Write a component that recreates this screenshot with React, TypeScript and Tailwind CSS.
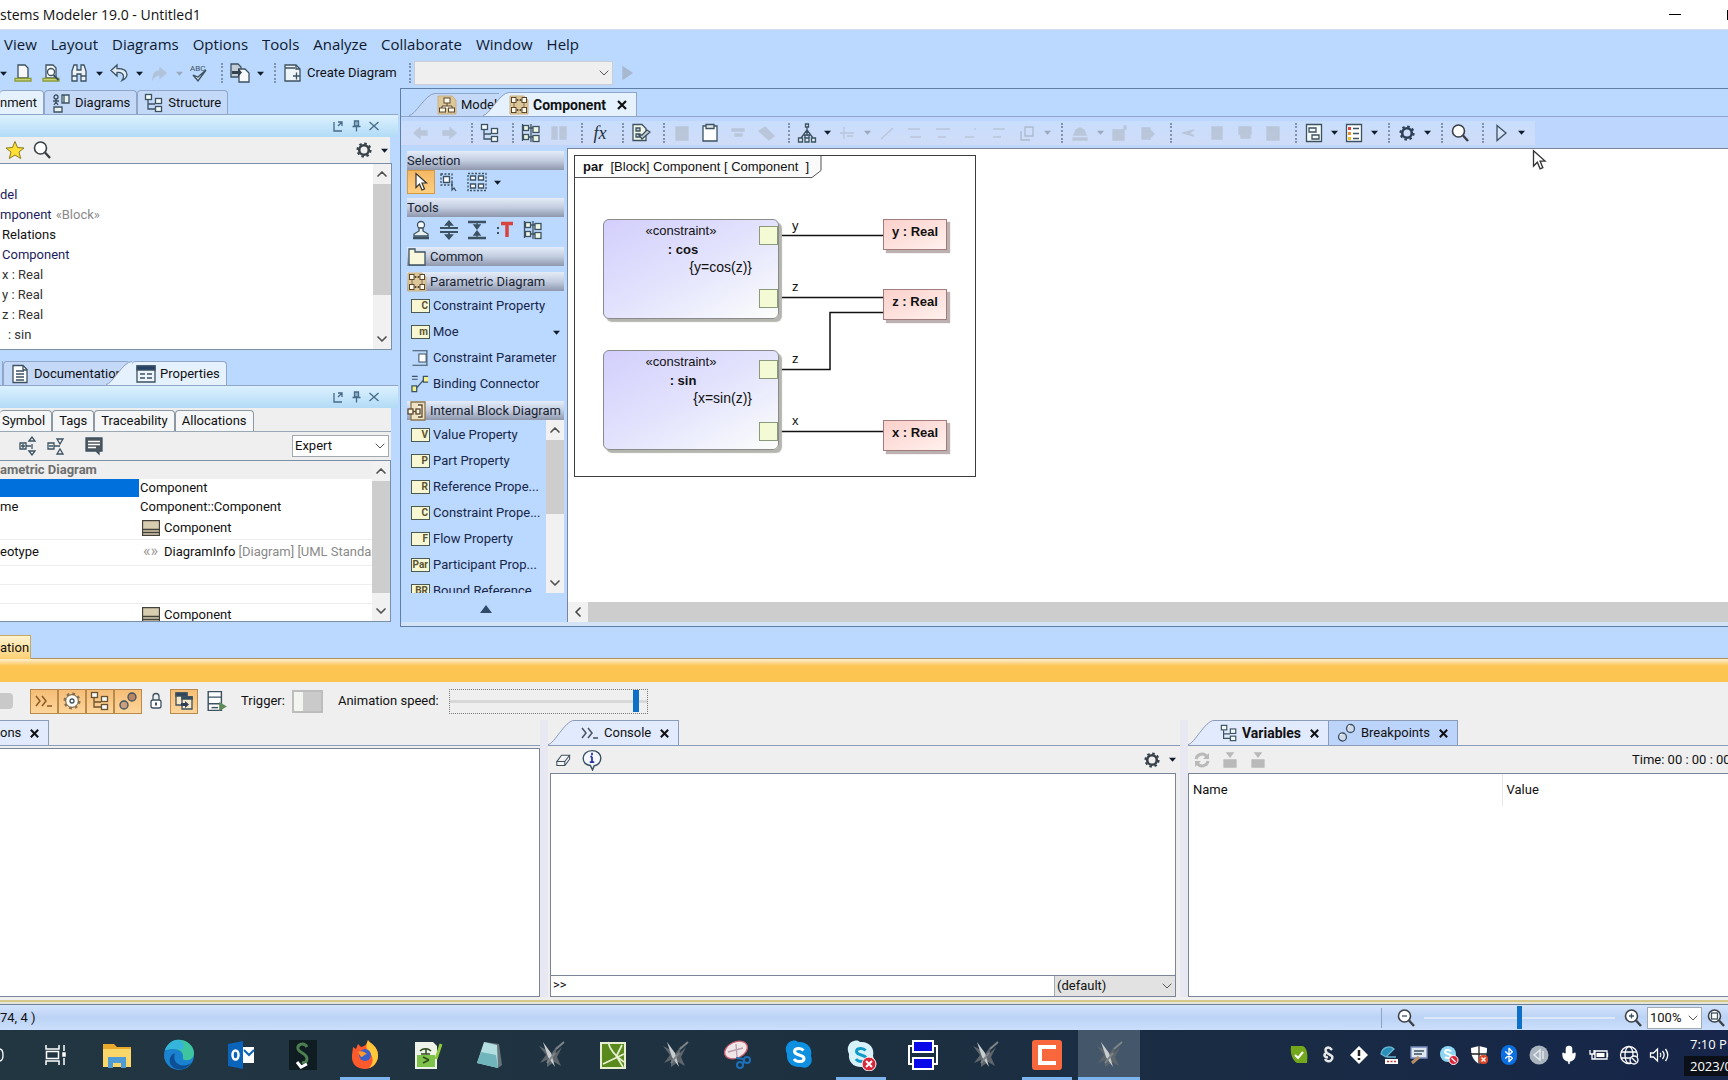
import type { ReactNode } from "react";
import { ChevronDown, ChevronUp, ChevronLeft, Mic, Bluetooth } from "lucide-react";

/* ---------- small drawing helpers ---------- */

function Icon({ children, className = "size-5", box = "0 0 20 20" }: { children: ReactNode; className?: string; box?: string }) {
  return (
    <svg viewBox={box} className={`shrink-0 ${className}`} fill="none" stroke="#3c5261" strokeWidth="1.3" aria-hidden="true">
      {children}
    </svg>
  );
}

const TreeIcon = ({ color = "#3c5261", className = "size-5" }: { color?: string; className?: string }) => (
  <Icon className={className}>
    <g stroke={color} fill="#f4fbf8">
      <path d="M4 7v9h8M4 11h7" fill="none" />
      <rect x="1.5" y="1.5" width="6" height="5" />
      <rect x="11.5" y="5.5" width="6" height="5" />
      <rect x="11.5" y="13.5" width="6" height="5" />
    </g>
  </Icon>
);

const BlocksIcon = () => (
  <Icon>
    <g fill="#eef7e6">
      <path d="M1.5 1v17M10 1v18" />
      <rect x="2.5" y="2.5" width="5" height="5" />
      <rect x="2.5" y="11.5" width="5" height="5" />
      <path d="M7.500 5H12M7.500 14H12" />
      <rect x="12" y="3.5" width="6" height="6" />
      <rect x="12" y="12.5" width="6" height="6" />
    </g>
  </Icon>
);

const ParIcon = () => (
  <Icon>
    <path d="M1 1h14l4 4v14H1z" fill="#dcc798" stroke="#c8b084" strokeWidth="1" />
    <g stroke="#5b4630" strokeWidth="1" fill="#fffaea">
      <path d="M7 5h6M5 7v6M15 7v6M7 15h6" strokeWidth="0.7" />
      <path d="M8.500 4v2M11.500 4v2M8.500 14v2M11.500 14v2" />
      <rect x="2.5" y="2.5" width="4.500" height="5" />
      <rect x="13" y="2.5" width="4.500" height="5" />
      <rect x="2.5" y="12.500" width="4.500" height="5" />
      <rect x="13" y="12.500" width="4.500" height="5" />
    </g>
  </Icon>
);

const ModelIcon = () => (
  <Icon>
    <path d="M1 1h14l4 4v14H1z" fill="#dcc798" stroke="#c8b084" strokeWidth="1" />
    <g stroke="#5b4630" strokeWidth="1" fill="#fffaea">
      <path d="M10 8v3M5 13v-2h10v2" />
      <rect x="7" y="3" width="6" height="5" />
      <rect x="2.5" y="13" width="6" height="4" />
      <rect x="11.5" y="13" width="6" height="4" />
    </g>
  </Icon>
);

const IbdIcon = () => (
  <Icon>
    <path d="M4 1h14v18H4z" fill="#efe2c2" stroke="#8a7550" />
    <g stroke="#5b4630" fill="#fdf6df">
      <path d="M11 4h4v12h-4" />
      <rect x="1" y="8" width="5" height="5" />
      <rect x="9" y="8" width="4" height="5" />
      <path d="M6 10.5h3" />
    </g>
  </Icon>
);

const Magnifier = ({ sign = "" }: { sign?: string }) => (
  <Icon>
    <circle cx="8.5" cy="8" r="6" fill="#fff" strokeWidth="1.6" stroke="#3b4046" />
    <path d="M13 12.5l5 5.5" strokeWidth="2.4" stroke="#3b4046" />
    {sign === "-" && <path d="M6 8h5" />}
    {sign === "+" && <path d="M6 8h5M8.500 5.500v5" />}
    {sign === "fit" && <rect x="5.5" y="5" width="6" height="6" />}
  </Icon>
);

const Gear = ({ color = "#38424a" }: { color?: string }) => (
  <Icon>
    <circle cx="10" cy="10" r="4.8" stroke={color} strokeWidth="2.600" />
    <circle cx="10" cy="10" r="6.6" stroke={color} strokeWidth="2" strokeDasharray="2.6 2.580" />
  </Icon>
);

const Balls = () => (
  <Icon>
    <circle cx="13.5" cy="5.5" r="4" fill="#cfd9ea" />
    <circle cx="5.5" cy="14" r="4" fill="#cfd9ea" />
    <path d="M11 3.5l2-1M3 12l2-1" stroke="#fff" />
  </Icon>
);

const ConsoleIcon = ({ color = "#475260" }: { color?: string }) => (
  <Icon>
    <path d="M2 5l4 5-4 5M8 5l4 5-4 5M13 15h5" stroke={color} strokeWidth="1.5" />
  </Icon>
);

const Undo = () => (
  <Icon>
    <path d="M8 2L2 7.500 8 13v-3.500c4-.5 6.500 1 6.500 4 0 1.500-.5 2.500-1.500 4 3-1.500 5-3.500 5-6C18 7.500 14 5.500 8 5.500z" fill="#e2ecf7" />
  </Icon>
);

// greyed out toolbar command
const Ghost = ({ d = "M4 4h12v13H4z" }: { d?: string }) => (
  <Icon>
    <path d={d} fill="#a9b0ba" stroke="#a9b0ba" opacity="0.5" />
  </Icon>
);

const Pointer = ({ className = "size-5" }: { className?: string }) => (
  <Icon className={className}>
    <path d="M5 1.5v14l3.500-3.500 2.500 6 2.500-1-2.500-6h4.500z" fill="#fff" stroke="#333" strokeWidth="1.2" />
  </Icon>
);

/* ---------- toolbar pieces ---------- */

function Tool({ label, children }: { label: string; children: ReactNode }) {
  return (
    <button aria-label={label} className="flex h-6 w-7 shrink-0 items-center justify-center">
      {children}
    </button>
  );
}

const Caret = ({ faint = false }: { faint?: boolean }) => (
  <span className="flex w-3 shrink-0 justify-center">
    <Icon className="size-[7px]" box="0 0 8 8">
      <path d="M0 2h8L4 6.500z" fill={faint ? "#9aa9bd" : "#101c2c"} stroke="none" />
    </Icon>
  </span>
);

const Grip = () => (
  <span className="flex w-[13px] shrink-0 justify-end pr-[3px]">
    <span className="h-5 border-l-2 border-dotted border-[#7f93ae]" />
  </span>
);

const Slant = ({ fill }: { fill: string }) => (
  <svg viewBox="0 0 26 25" className="h-full w-[26px] shrink-0" preserveAspectRatio="none" fill="none" aria-hidden="true">
    <path d="M0 25C6 25 17 0 26 0.500V25z" fill={fill} />
    <path d="M0 24.5C6 24.500 17 0.500 26 0.500" stroke="#8a9cb8" />
  </svg>
);

const Close = ({ className = "size-3" }: { className?: string }) => (
  <Icon className={className} box="0 0 12 12">
    <path d="M2 2l8 8M10 2l-8 8" stroke="#111" strokeWidth="2.2" />
  </Icon>
);

function DockHeader() {
  return (
    <div className="flex h-[22px] shrink-0 items-center justify-end gap-1.5 bg-linear-to-b from-[#dcf1ff] to-[#b2dbf6] pr-[18px]">
      <button aria-label="Float">
        <Icon className="size-3" box="0 0 12 12">
          <path d="M2 2v9h8M6 2h4v4M10 2L6 6" stroke="#456a88" />
        </Icon>
      </button>
      <button aria-label="Pin">
        <Icon className="size-3" box="0 0 12 12">
          <path d="M4.500 1h4v5h-4zM2.500 6.500h8M6.500 6.500v5" stroke="#456a88" fill="#8fb0c8" />
        </Icon>
      </button>
      <button aria-label="Close">
        <Icon className="size-3" box="0 0 12 12">
          <path d="M1.500 2l9 8M10.500 2l-9 8" stroke="#456a88" />
        </Icon>
      </button>
    </div>
  );
}

function ScrollBar({ thumb }: { thumb: string }) {
  return (
    <div className="flex w-[18px] shrink-0 flex-col items-center bg-[#f1f1f1] text-[#505050]">
      <span className="flex h-5 items-center"><ChevronUp className="size-4" strokeWidth={2.5} /></span>
      <span className={`w-full bg-[#cdcdcd] ${thumb}`} />
      <span className="mt-auto flex h-5 items-center"><ChevronDown className="size-4" strokeWidth={2.5} /></span>
    </div>
  );
}

function Drop({ label, value, className }: { label: string; value: string; className: string }) {
  return (
    <span className={`relative flex items-center border border-[#a3a9b1] ${className}`}>
      <select aria-label={label} className="h-full w-full appearance-none bg-transparent pl-0.5 outline-none">
        <option>{value}</option>
      </select>
      <ChevronDown className="pointer-events-none absolute right-0 size-4 text-[#555]" strokeWidth={1.5} />
    </span>
  );
}

/* ---------- top of the window ---------- */

function TopBars() {
  const menus = ["View", "Layout", "Diagrams", "Options", "Tools", "Analyze", "Collaborate", "Window", "Help"];
  return (
    <header className="shrink-0">
      <div className="flex h-[29px] items-center bg-white [font-family:'Open_Sans',sans-serif] text-sm">
        <span>stems Modeler 19.0 - Untitled1</span>
        <button aria-label="Minimize" className="mr-[46px] ml-auto h-px w-3 bg-black" />
        <button aria-label="Maximize" className="h-2.5 w-px bg-black" />
      </div>
      <nav className="flex h-[29px] items-center gap-3.5 border-t border-[#d5dcf0] pl-1 [font-family:'Open_Sans',sans-serif] text-[15px] font-medium text-[#0d1a30]">
        {menus.map((m) => (
          <button key={m}>{m}</button>
        ))}
      </nav>
      <div className="flex h-[30px] items-center text-[13px]">
        <span className="flex w-[9px] justify-end"><Caret /></span>
        <Tool label="New">
          <Icon>
            <path d="M5 2h7l3 3v10H5z" fill="#f6f8fa" />
            <path d="M2 15.5h16V18H2z" fill="#dbe48c" stroke="#8c9c34" />
          </Icon>
        </Tool>
        <Tool label="Print preview">
          <Icon>
            <path d="M5 2h7l3 3v10H5z" fill="#f6f8fa" />
            <path d="M2 15.5h16V18H2z" fill="#dbe48c" stroke="#8c9c34" />
            <circle cx="10" cy="9" r="3.5" fill="#fff" />
            <path d="M12.5 12l5 5" strokeWidth="2" />
          </Icon>
        </Tool>
        <Tool label="Find">
          <Icon>
            <path d="M3 8l2-6h3v5h4V2h3l2 6v10h-5v-7H8v7H3z" fill="#eef3f8" />
            <path d="M3 13h5M12 13h5" />
          </Icon>
        </Tool>
        <Caret />
        <Tool label="Undo"><Undo /></Tool>
        <Caret />
        <Tool label="Redo"><Ghost d="M4 16c0-6 2-8 7-8V5l6 5-6 5v-3c-4 0-5 1-7 4z" /></Tool>
        <Caret faint />
        <Tool label="Spelling">
          <Icon>
            <text x="1" y="8" fontSize="8" fill="#3c5261" stroke="none" className="[font-family:Roboto,sans-serif]">ABC</text>
            <path d="M4 12l5 6 8-11-8 7z" fill="#cdd7e4" />
          </Icon>
        </Tool>
        <Grip />
        <Tool label="Export">
          <Icon>
            <path d="M1 1h7l3 3v10H1z" fill="#c3ced8" />
            <path d="M9 6h6l4 4v9H9z" fill="#f6f8fa" />
            <path d="M2 8h6v-3l4 4.500L8 14v-3H2z" fill="#33424f" stroke="none" />
          </Icon>
        </Tool>
        <Caret />
        <Grip />
        <button className="flex items-center pl-1">
          <Icon>
            <path d="M2 2h11l4 4v12H2z" fill="#eef4f8" />
            <path d="M2 5h10M13 2v4h4M10 13h7M13.500 9.500v7" />
          </Icon>
          <span className="pr-1 pl-1">Create Diagram</span>
        </button>
        <Grip />
        <Drop label="Perspective" value="" className="h-6 w-[199px] border-[#c9ced6] bg-[#efefef]" />
        <Tool label="Run">
          <Icon>
            <path d="M6 4l9 6-9 6z" fill="#a7b8cf" stroke="#a7b8cf" />
          </Icon>
        </Tool>
      </div>
    </header>
  );
}

/* ---------- left docks ---------- */

function DockTab({ icon, children, className = "" }: { icon?: ReactNode; children: ReactNode; className?: string }) {
  return (
    <button className={`flex h-6 shrink-0 items-center gap-1 rounded-t-sm border border-b-0 border-[#8fa6c8] px-1.5 ${className}`}>
      {icon}
      {children}
    </button>
  );
}

const treeItems = [
  { text: "del", pad: "pl-0", color: "text-[#1c1c5c]" },
  { text: "mponent", tag: "«Block»", pad: "pl-0", color: "text-[#1c1c5c]" },
  { text: "Relations", pad: "pl-0.5", color: "text-[#111]" },
  { text: "Component", pad: "pl-0.5", color: "text-[#1c1c5c]" },
  { text: "x : Real", pad: "pl-0.5", color: "text-[#333]" },
  { text: "y : Real", pad: "pl-0.5", color: "text-[#333]" },
  { text: "z : Real", pad: "pl-0.5", color: "text-[#333]" },
  { text: ": sin", pad: "pl-2", color: "text-[#333]" },
];

const ClassIcon = () => (
  <Icon className="h-4 w-[18px]" box="0 0 18 16">
    <path d="M.5.5h17v15H.5z" fill="#d9cdb0" stroke="#44403a" />
    <path d="M1 9.5h16M1 12.5h16" stroke="#44403a" />
  </Icon>
);

function LeftDocks() {
  return (
    <aside className="flex w-[398px] shrink-0 flex-col pt-0.5 pb-[5px]">
      <section className="flex min-h-0 flex-1 flex-col">
        <div className="flex border-b border-[#8fa6c8]">
          <DockTab className="border-l-0 bg-[#e6f1fe] pl-0">nment</DockTab>
          <DockTab
            className="bg-[#c4d9f8]"
            icon={
              <Icon>
                <circle cx="5" cy="4" r="2" />
                <path d="M5 6v5M2 8h6M5 9l-2 3M5 9l2 3M11 2h7v8h-7zM13 2v8M3 14h8v5H3z" fill="#e8f2f0" />
              </Icon>
            }
          >
            Diagrams
          </DockTab>
          <DockTab className="bg-[#c4d9f8]" icon={<TreeIcon />}>Structure</DockTab>
        </div>
        <DockHeader />
        <div className="mr-2 flex h-[26px] shrink-0 items-center bg-[#efefef]">
          <button aria-label="Favorites">
            <Icon className="mx-[5px] size-5">
              <path d="M10 1.5l2.500 6 6.500.5-5 4 1.700 6.500L10 15l-5.700 3.500L6 12 1 8l6.500-.5z" fill="#ffe033" stroke="#8a7a20" strokeWidth="1" />
            </Icon>
          </button>
          <button aria-label="Search" className="pl-0.5"><Magnifier /></button>
          <span className="ml-auto" />
          <Tool label="Options"><Gear /></Tool>
          <Caret />
        </div>
        <div className="mr-1.5 flex min-h-0 flex-1 border border-l-0 border-[#7b8fa8] bg-white">
          <ul className="flex-1 pt-[21px]">
            {treeItems.map((t) => (
              <li key={t.text} className={`h-5 leading-5 ${t.pad} ${t.color}`}>
                {t.text}
                {t.tag && <span className="pl-1 text-[#8a8a8a]">{t.tag}</span>}
              </li>
            ))}
          </ul>
          <ScrollBar thumb="h-[111px]" />
        </div>
      </section>

      <section className="mt-[11px] flex h-[261px] shrink-0 flex-col">
        <div className="flex border-b border-[#8fa6c8]">
          <span className="w-[3px] border-r border-[#8fa6c8]" />
          <DockTab
            className="w-[127px] border-r-0 bg-[#c4d9f8]"
            icon={
              <Icon>
                <path d="M3 1.5h10l4 4v13H3z" fill="#fff" />
                <path d="M6 7h8M6 10h8M6 13h8M6 16h8M13 2v4h4" />
              </Icon>
            }
          >
            Documentation
          </DockTab>
          <div className="-ml-6 flex h-6">
            <Slant fill="#e6f1fe" />
            <DockTab
              className="border-l-0 bg-[#e6f1fe] pl-1"
              icon={
                <Icon>
                  <path d="M1 2h18v16H1z" fill="#eef4fb" />
                  <path d="M1 2h18v4H1z" fill="#22406a" />
                  <path d="M4 10h5M11 10h5M4 14h5M11 14h5" />
                </Icon>
              }
            >
              Properties
            </DockTab>
          </div>
        </div>
        <DockHeader />
        <div className="mr-[7px] flex h-6 shrink-0 border-b border-[#9aa7b5] bg-[#efefef] pt-0.5">
          {["Symbol", "Tags", "Traceability", "Allocations"].map((t) => (
            <button key={t} className="rounded-t-sm border border-b-0 border-[#8e98a3] bg-[#f5f6f7] px-1.5 first:border-l-0 first:pl-0.5">
              {t}
            </button>
          ))}
        </div>
        <div className="mr-[7px] flex h-7 shrink-0 items-center bg-[#efefef] pl-3.5">
          <Tool label="Expand">
            <Icon>
              <path d="M2 7h6v6H2zM3 10h4M5 8v4M8 10h5M14 8v5" />
              <path d="M11 5l3-4 3 4zM11 15l3 4 3-4z" />
            </Icon>
          </Tool>
          <Tool label="Collapse">
            <Icon>
              <path d="M2 7h6v6H2zM3 10h4M8 10h6" />
              <path d="M11 3l3 5 3-5zM11 18l3-5 3 5z" />
            </Icon>
          </Tool>
          <span className="w-2.5" />
          <Tool label="Description">
            <Icon>
              <path d="M2 2h16v13h-3v3l-3-3H2z" fill="#4e565e" />
              <path d="M4 5.5h12M4 8.500h12M4 11.500h8" stroke="#fff" />
            </Icon>
          </Tool>
          <Drop label="Mode" value="Expert" className="mr-0.5 ml-auto h-[22px] w-[97px] bg-white" />
        </div>
        <div className="mr-[7px] flex min-h-0 flex-1 overflow-hidden border border-l-0 border-[#7b8fa8] bg-white">
          <div className="h-full min-w-0 flex-1 overflow-hidden">
            <table className="w-full table-fixed">
              <colgroup>
                <col className="w-[139px]" />
                <col />
              </colgroup>
              <tbody>
                <tr className="h-[18px] bg-[#efefef] text-left text-[#6e6e6e]">
                  <th colSpan={2} className="font-bold">ametric Diagram</th>
                </tr>
                <tr className="h-[18px]"><td className="bg-[#0070dc]" /><td className="pl-px">Component</td></tr>
                <tr className="h-5"><td>me</td><td className="pl-px">Component::Component</td></tr>
                <tr className="h-[22px] border-b border-[#eee]">
                  <td />
                  <td><span className="flex items-center gap-1 pl-[3px]"><ClassIcon />Component</span></td>
                </tr>
                <tr className="h-[26px] border-b border-[#eee]">
                  <td>eotype</td>
                  <td className="overflow-hidden pl-1 whitespace-nowrap">
                    <span className="pr-1.5 text-base leading-4 text-[#999]">«»</span>
                    <span>DiagramInfo</span> <span className="text-[#8a8a8a]">[Diagram] [UML Standard]</span>
                  </td>
                </tr>
                <tr className="h-[19px] border-b border-[#eee]"><td /><td /></tr>
                <tr className="h-[19px] border-b border-[#eee]"><td /><td /></tr>
                <tr className="h-6">
                  <td />
                  <td><span className="flex items-center gap-1 pl-[3px]"><ClassIcon />Component</span></td>
                </tr>
              </tbody>
            </table>
          </div>
          <ScrollBar thumb="h-[112px]" />
        </div>
      </section>
    </aside>
  );
}

/* ---------- palette ---------- */

function PaletteHead({ icon, children }: { icon?: ReactNode; children: ReactNode }) {
  return (
    <h3 className="flex h-[19px] shrink-0 items-center gap-[3px] bg-linear-to-b from-[#e4ecf8] via-[#c3cde0] to-[#8e97ac] whitespace-nowrap text-[#1b2433]">
      {icon}
      {children}
    </h3>
  );
}

const Letter = ({ children }: { children: string }) => (
  <span className="flex h-[14px] w-[19px] shrink-0 items-center justify-end border border-[#4c5a52] bg-[#f7f7d4] pr-px text-[10px] leading-none font-bold text-[#5c5330]">
    {children}
  </span>
);

function PaletteItem({ icon, children }: { icon: ReactNode; children: ReactNode }) {
  return (
    <button className="flex h-[26px] w-full shrink-0 items-center gap-[3px] pl-1 text-left whitespace-nowrap text-[#17274a]">
      {icon}
      {children}
    </button>
  );
}

const properties = [
  ["V", "Value Property"],
  ["P", "Part Property"],
  ["R", "Reference Prope..."],
  ["C", "Constraint Prope..."],
  ["F", "Flow Property"],
  ["Par", "Participant Prop..."],
  ["BR", "Bound Reference"],
];

function Palette() {
  return (
    <div className="flex w-[157px] shrink-0 flex-col pt-[3px]">
      <PaletteHead>Selection</PaletteHead>
      <div className="flex h-7 items-start">
        <button aria-label="Select" className="flex h-6 w-7 items-center justify-center border border-[#d99a3c] bg-linear-to-b from-[#f3b765] to-[#ffcf80]">
          <Pointer />
        </button>
        <Tool label="Select area">
          <Icon>
            <path d="M2 2h11v11H2z" strokeDasharray="2 1.5" />
            <path d="M4.500 4.500h6v6h-6z" fill="#fff" />
            <path d="M13 10v8l2-2 2 3" />
          </Icon>
        </Tool>
        <Tool label="Select all">
          <Icon>
            <path d="M1 1.5h18v17H1z" strokeDasharray="2 1.5" />
            <path d="M3.500 4h5v4h-5zM11.500 4h5v4h-5zM3.500 12h5v4h-5zM11.500 12h5v4h-5z" fill="#fff" />
          </Icon>
        </Tool>
        <span className="flex h-6 items-center"><Caret /></span>
      </div>
      <PaletteHead>Tools</PaletteHead>
      <div className="flex h-[30px] items-center pb-1">
        <Tool label="Stamp">
          <Icon>
            <circle cx="10" cy="5" r="3.5" fill="#fff" />
            <path d="M8 8v3l-5 3v2h14v-2l-5-3V8z" fill="#e8f0f0" />
            <path d="M2 18h16" strokeWidth="2.5" />
          </Icon>
        </Tool>
        <Tool label="Spread">
          <Icon>
            <path d="M1 8h18M1 12h18M10 3v4M10 13v3" strokeWidth="1.8" />
            <path d="M6.500 5L10 1l3.500 4zM6.500 15l3.500 4 3.500-4z" fill="#3c5261" />
          </Icon>
        </Tool>
        <Tool label="Compress">
          <Icon>
            <path d="M1 2h18M1 18h18" strokeWidth="2.5" />
            <path d="M10 3v4M10 13v4" />
            <path d="M7 5h6l-3 4zM7 15h6l-3-4z" fill="#3c5261" />
          </Icon>
        </Tool>
        <Tool label="Text">
          <Icon>
            <path d="M6 3.500h12M12 4v13" stroke="#d8433f" strokeWidth="3.5" />
            <path d="M3 7v2M3 12v2" strokeWidth="2" />
          </Icon>
        </Tool>
        <Tool label="Blocks"><BlocksIcon /></Tool>
      </div>
      <PaletteHead
        icon={
          <Icon>
            <path d="M2 5V2h6v3h10v13H2z" fill="#f9f8dc" />
          </Icon>
        }
      >
        Common
      </PaletteHead>
      <div className="h-1.5 shrink-0" />
      <PaletteHead icon={<ParIcon />}>Parametric Diagram</PaletteHead>
      <div className="h-0.5 shrink-0" />
      <PaletteItem icon={<Letter>C</Letter>}>Constraint Property</PaletteItem>
      <PaletteItem icon={<Letter>m</Letter>}>
        Moe
        <span className="mr-0.5 ml-auto"><Caret /></span>
      </PaletteItem>
      <PaletteItem
        icon={
          <Icon className="h-4 w-[19px]">
            <path d="M0 1h19M0 19h19M18 1v18" />
            <path d="M8 5h9v10H8z" fill="#fff" />
          </Icon>
        }
      >
        Constraint Parameter
      </PaletteItem>
      <PaletteItem
        icon={
          <Icon className="h-5 w-[19px]">
            <path d="M1 2h6M1 5h6M6 14L13 6" />
            <path d="M1 12h5v6H1zM18 2h-5v6h5" fill="#f3f08c" />
          </Icon>
        }
      >
        Binding Connector
      </PaletteItem>
      <div className="h-1 shrink-0" />
      <PaletteHead icon={<IbdIcon />}>Internal Block Diagram</PaletteHead>
      <div className="flex h-[173px] shrink-0 overflow-hidden">
        <div className="min-w-0 flex-1 pt-0.5">
          {properties.map(([k, name]) => (
            <PaletteItem key={name} icon={<Letter>{k}</Letter>}>{name}</PaletteItem>
          ))}
        </div>
        <ScrollBar thumb="h-[74px]" />
      </div>
      <button aria-label="Collapse palette" className="mt-2.5 flex justify-center">
        <Icon className="h-3 w-4" box="0 0 16 12">
          <path d="M2 10h12L8 2z" fill="#2f4a66" stroke="none" />
        </Icon>
      </button>
    </div>
  );
}

/* ---------- diagram ---------- */

function Constraint({ name, rule, className, ports }: { name: string; rule: string; className: string; ports: string[] }) {
  return (
    <div className={`absolute left-[28px] h-[100px] w-[176px] rounded-md border border-[#8b8b8b] bg-linear-to-br from-[#d3cffc] via-[#e3e3fd] to-[#fcfefb] pt-px text-center leading-[19px] shadow-[3px_3px_1px_#b5b5b0] ${className}`}>
      <p className="pr-5">«constraint»</p>
      <p className="pr-4 font-bold">: {name}</p>
      <p className="pr-[26px] text-right text-sm leading-[17px]">{rule}</p>
      {ports.map((p) => (
        <span key={p} className={`absolute right-0 size-[19px] border border-[#8b9a7c] bg-[#f4fbd4] ${p}`} />
      ))}
    </div>
  );
}

const Value = ({ children, className }: { children: string; className: string }) => (
  <div className={`absolute left-[308px] h-[31px] w-16 border border-[#a07d7d] bg-linear-to-br from-[#fbd0cb] to-[#fff1ee] text-center leading-6 font-bold shadow-[3px_3px_1px_#bdb0b0] ${className}`}>
    {children}
  </div>
);

function Diagram() {
  return (
    <div className="flex min-w-0 flex-1 flex-col border-t border-l border-[#7b8598] bg-white">
      <div className="relative flex-1 pt-1.5 pl-1.5 [font-family:'Liberation_Sans',sans-serif] text-[13px] text-[#111]">
        <div className="relative h-[322px] w-[402px] border border-[#3d3d3d]">
          <svg className="absolute top-0 left-0 h-full w-full" fill="none" stroke="#111" strokeWidth="1.5" aria-hidden="true">
            <path d="M0 21.5h237l9-7V0" fill="#fafafa" stroke="#555" strokeWidth="1" />
            <path d="M204 79.5h104M204 141.5h104M204 213.5h51V156.500h53M204 275.5h104" />
          </svg>
          <p className="relative pl-2 leading-[22px] whitespace-pre">
            <b>par</b>{"  [Block] Component [ Component  ]"}
          </p>
          <Constraint name="cos" rule="{y=cos(z)}" className="top-[63px]" ports={["top-[6px]", "top-[69px]"]} />
          <Constraint name="sin" rule="{x=sin(z)}" className="top-[194px]" ports={["top-[9px]", "top-[71px]"]} />
          <Value className="top-[63px]">y : Real</Value>
          <Value className="top-[133px]">z : Real</Value>
          <Value className="top-[264px]">x : Real</Value>
          <span className="absolute top-[61px] left-[217px]">y</span>
          <span className="absolute top-[122px] left-[217px]">z</span>
          <span className="absolute top-[194px] left-[217px]">z</span>
          <span className="absolute top-[256px] left-[217px]">x</span>
        </div>
        <Pointer className="absolute top-0 right-[178px] size-[22px]" />
      </div>
      <div className="flex h-5 shrink-0 items-center bg-[#f1f1f1]">
        <ChevronLeft className="mx-0.5 size-4 text-[#444]" strokeWidth={2.5} />
        <span className="h-full flex-1 bg-[#cdcdcd]" />
      </div>
    </div>
  );
}

function Editor() {
  return (
    <main className="ml-0.5 flex min-w-0 flex-1 flex-col border-t border-b border-l border-[#5f7fa6]">
      <div className="flex h-7 shrink-0 items-end border-b border-[#8fa6c8]">
        <div className="ml-2 flex h-[23px]">
          <Slant fill="#c4d9f8" />
          <button className="flex w-[64px] items-center gap-1 overflow-hidden border-t border-[#8fa6c8] bg-[#c4d9f8] pl-0.5">
            <ModelIcon />
            Model
          </button>
        </div>
        <div className="-ml-4 flex h-[24px]">
          <Slant fill="#e6f1fe" />
          <button className="flex items-center gap-1 border-t border-r border-[#8fa6c8] bg-[#e6f1fe] pr-2 text-sm font-bold">
            <ParIcon />
            Component
            <span className="pl-1.5"><Close /></span>
          </button>
        </div>
      </div>
      <div className="flex h-[31px] shrink-0 items-center overflow-hidden bg-[#bdd6fd]">
        <div className="flex items-center bg-linear-to-b from-[#c8defd] to-[#cfdcf8] pr-2 pl-1.5">
          <Tool label="Back"><Ghost d="M3 10l6-5v3h7v4H9v3z" /></Tool>
          <Tool label="Forward"><Ghost d="M17 10l-6-5v3H4v4h7v3z" /></Tool>
          <Grip />
          <Tool label="Containment"><TreeIcon /></Tool>
          <Grip />
          <Tool label="Layout"><BlocksIcon /></Tool>
          <Tool label="Layout options"><Ghost d="M3 4h5v12H3zM11 4h6v12h-6z" /></Tool>
          <Grip />
          <Tool label="Function"><i className="[font-family:'Liberation_Serif',serif] text-lg leading-none text-[#24313d]">fx</i></Tool>
          <Grip />
          <Tool label="Validate">
            <Icon>
              <path d="M2 1.5h9l4 4v12H2z" fill="#f0f6e8" />
              <path d="M5 5h4v3H5zM5 11h4v3H5zM8 12l3 4 8-7-3-2-5 5z" fill="#c5cfd4" />
            </Icon>
          </Tool>
          <Grip />
          <Tool label="Copy"><Ghost /></Tool>
          <Tool label="Paste">
            <Icon>
              <path d="M3 3h14v15H3z" fill="#fff" />
              <path d="M6 1.5h8v4H6z" fill="#dfe9ea" />
            </Icon>
          </Tool>
          <Tool label="Delete"><Ghost d="M4 6h12v2H4zM7 11h7v2H7z" /></Tool>
          <Tool label="Cut"><Ghost d="M3 8l6-4 9 9-5 4z" /></Tool>
          <Grip />
          <Tool label="Hierarchy">
            <Icon>
              <path d="M10 4v9M10 7l-6 8M10 7l6 8M6 12h8M8 12v3M12 12v3" />
              <path d="M8.500 1h3v3h-3zM1.500 15h4v4h-4zM8 15h4v4H8zM14.500 15h4v4h-4z" fill="#dfe8ee" />
            </Icon>
          </Tool>
          <Caret />
          <Tool label="Align"><Ghost d="M3 10h14M7 4v12M10 13h6" /></Tool>
          <Caret faint />
          <Tool label="Oblique"><Ghost d="M4 16L16 5" /></Tool>
          <Tool label="Rectilinear"><Ghost d="M3 6h12M5 14h11" /></Tool>
          <Tool label="Bezier"><Ghost d="M3 6h14M5 14h8" /></Tool>
          <Tool label="Split"><Ghost d="M4 14h9M14 5v2" /></Tool>
          <Tool label="Merge"><Ghost d="M4 6h12M4 14h8" /></Tool>
          <Tool label="Order"><Icon><path d="M8 4h8v9H8zM4 8v9h9" stroke="#9fabb9" opacity="0.7" /></Icon></Tool>
          <Caret faint />
          <Grip />
          <Tool label="Fill"><Ghost d="M4 12l2-5 4-2 4 2 2 5zM3 15h14v2H3z" /></Tool>
          <Caret faint />
          <Tool label="Line"><Ghost d="M3 7h11v10H3zM14 3h2v3h-2z" /></Tool>
          <Tool label="Font"><Ghost d="M4 5h8v11H4zM13 8l3 3-3 3z" /></Tool>
          <Grip />
          <Tool label="Trim"><Ghost d="M4 10l11-3-5 3 5 3z" /></Tool>
          <Tool label="Group"><Ghost d="M5 4h10v12H5z" /></Tool>
          <Tool label="Ungroup"><Ghost d="M4 4h12v7H4zM6 11h9v4H6z" /></Tool>
          <Tool label="Arrange"><Ghost /></Tool>
          <Grip />
          <Tool label="Show">
            <Icon>
              <path d="M2.500 1.500h15v17h-15z" fill="#f4fbf8" />
              <path d="M5 5h7v4H5zM8 12h7v4H8z" />
            </Icon>
          </Tool>
          <Caret />
          <Tool label="Legend">
            <Icon>
              <path d="M2.500 1.500h15v17h-15z" fill="#fff" />
              <path d="M4 4h3v3H4z" fill="#d8433f" stroke="none" />
              <path d="M4 9h3v3H4z" fill="#e89030" stroke="none" />
              <path d="M4 14h3v3H4z" fill="#e8c030" stroke="none" />
              <path d="M9 5.500h6M9 10.500h6M9 15.500h6" />
            </Icon>
          </Tool>
          <Caret />
          <Grip />
          <Tool label="Settings"><Gear color="#2c4054" /></Tool>
          <Caret />
          <Grip />
          <Tool label="Zoom"><Magnifier /></Tool>
          <Grip />
          <Tool label="Simulate">
            <Icon>
              <path d="M6 2.500l9 7.500-9 7.500z" fill="#d7e3fa" />
            </Icon>
          </Tool>
          <Caret />
        </div>
      </div>
      <div className="flex min-h-0 flex-1 gap-[3px] border-b-4 border-[#d4e3f5] pl-1.5">
        <Palette />
        <Diagram />
      </div>
    </main>
  );
}

/* ---------- simulation ---------- */

const Lit = ({ label, children }: { label: string; children: ReactNode }) => (
  <button aria-label={label} className="flex h-[25px] w-7 shrink-0 items-center justify-center border border-[#b98a4a] bg-linear-to-b from-[#f5bd76] to-[#fcd59a]">
    {children}
  </button>
);

function PanelTab({ icon, children, slant = false, className = "" }: { icon?: ReactNode; children: ReactNode; slant?: boolean; className?: string }) {
  return (
    <div className="flex h-[25px] shrink-0">
      {slant && <Slant fill="#e1ebfd" />}
      <button className={`flex items-center gap-1 border-t border-r border-[#8a9cb8] pr-2 ${className}`}>
        {icon}
        {children}
        <span className="pl-1"><Close className="size-[11px]" /></span>
      </button>
    </div>
  );
}

function Simulation() {
  return (
    <section className="flex h-[370px] shrink-0 flex-col">
      <div className="flex h-6 border-b border-[#b09060]">
        <button className="h-6 w-[31px] border-t border-r border-[#c9a860] bg-linear-to-b from-[#fff3d0] to-[#ffd070] text-left">ation</button>
      </div>
      <div className="h-[23px] shrink-0 bg-linear-to-b from-[#ffefcc] to-[#fcc552] to-30%" />
      <div className="flex h-[38px] shrink-0 items-center bg-[#efefef]">
        <span className="mr-[17px] h-4 w-[13px] rounded-r-sm bg-[#c9c9c9]" />
        <Lit label="Console"><ConsoleIcon color="#8a5a28" /></Lit>
        <Lit label="Options">
          <Icon>
            <circle cx="10" cy="10" r="7" strokeDasharray="2.7 2.8" strokeWidth="3" stroke="#8a7550" />
            <circle cx="10" cy="10" r="6.3" fill="#fffdf5" stroke="#6a5a40" strokeWidth="1" />
            <circle cx="10" cy="10" r="2" />
          </Icon>
        </Lit>
        <Lit label="Variables"><TreeIcon color="#6a5230" /></Lit>
        <Lit label="Breakpoints">
          <Icon>
            <circle cx="14" cy="6" r="4" fill="#b78562" />
            <circle cx="6" cy="14" r="4" fill="#c99f7c" />
          </Icon>
        </Lit>
        <Tool label="Lock">
          <Icon>
            <path d="M7 9V5.500a3 3 0 0 1 6 0V9" />
            <rect x="5" y="9" width="10" height="8" rx="2" fill="#fff" />
            <path d="M10 11.5v3" strokeWidth="2" />
          </Icon>
        </Tool>
        <Lit label="Switch">
          <Icon>
            <path d="M2 2h11v12H2z" fill="#f7e8c8" />
            <path d="M2 2h11v3H2zM8 6h10v2H8z" fill="#2f3d58" />
            <path d="M8 6h10v12H8z" fill="#f7e8c8" />
            <path d="M8 6h10v2H8z" fill="#2f3d58" />
            <path d="M7 12h4v-2l4 3.500-4 3.500v-2H7z" fill="#2f3d58" stroke="none" />
          </Icon>
        </Lit>
        <Tool label="Export">
          <Icon className="ml-2.5 size-[22px]">
            <path d="M2 1.5h12v5H2zM2 6.500h12v6H2zM2 12.500h12v6H2z" fill="#fff" />
            <path d="M5 16h6" />
            <path d="M12 11l7 4-7 4z" fill="#5d8a58" stroke="none" />
          </Icon>
        </Tool>
        <label className="flex items-center gap-[7px] pl-[15px]">
          Trigger:
          <input type="checkbox" className="h-[23px] w-[31px] appearance-none border-2 border-[#bdbdbd] bg-linear-to-r from-[#f2f5f0] from-35% to-[#cacaca] to-35%" />
        </label>
        <label className="flex items-center gap-2.5 pl-[15px]">
          Animation speed:
          <span className="flex h-[25px] w-[199px] items-center border border-dotted border-[#777]">
            <input
              type="range"
              defaultValue={96}
              className="h-[23px] w-full appearance-none bg-transparent [&::-webkit-slider-runnable-track]:h-[23px] [&::-webkit-slider-runnable-track]:bg-[linear-gradient(#d8d8d8,#d8d8d8)] [&::-webkit-slider-runnable-track]:bg-[length:100%_3px] [&::-webkit-slider-runnable-track]:bg-center [&::-webkit-slider-runnable-track]:bg-no-repeat [&::-webkit-slider-thumb]:h-[22px] [&::-webkit-slider-thumb]:w-[6px] [&::-webkit-slider-thumb]:appearance-none [&::-webkit-slider-thumb]:bg-[#0e6fc9]"
            />
          </span>
        </label>
      </div>
      <div className="grid min-h-0 flex-1 grid-cols-[540fr_648fr_540fr] bg-[#efefef] pb-[3px]">
        <div className="flex min-h-0 flex-col">
          <div className="flex border-b border-[#8a9cb8]">
            <PanelTab className="bg-[#e1ebfd]">ons</PanelTab>
          </div>
          <div className="mt-0.5 flex-1 border border-l-0 border-[#7b8598] bg-white" />
        </div>

        <div className="flex min-h-0 flex-col border-x-[8px] border-[#e8e8f2]">
          <div className="flex border-b border-[#8a9cb8]">
            <PanelTab slant className="bg-[#e1ebfd] pl-1.5" icon={<ConsoleIcon />}>Console</PanelTab>
          </div>
          <div className="mx-0.5 flex h-[27px] shrink-0 items-center">
            <Tool label="Clear">
              <Icon className="size-4">
                <path d="M1 12l6-8h10l-6 8zM1 12v5h10l6-8V4M11 12v5" fill="#f6f6f6" />
              </Icon>
            </Tool>
            <Tool label="Information">
              <Icon className="size-[22px]">
                <path d="M10 1.500c5 0 8 3 8 7s-3 6.500-6 6.700L10.500 19 8.500 15C4.500 14.500 2 12 2 8.500s3-7 8-7z" fill="#f4f7fd" />
                <path d="M10 7v5M10 3.500v2.200M8.500 7H10M8 12h4" stroke="#2733a8" strokeWidth="1.600" />
              </Icon>
            </Tool>
            <span className="ml-auto" />
            <Tool label="Options"><Gear /></Tool>
            <Caret />
          </div>
          <div className="mr-1 ml-0.5 flex-1 border border-[#7b8598] bg-white" />
          <div className="mr-1 ml-0.5 flex h-[21px] shrink-0 border border-t-0 border-[#7b8598] bg-white">
            <label htmlFor="cmd" className="pl-0.5">&gt;&gt;</label>
            <input id="cmd" className="min-w-0 flex-1 px-1 outline-none" />
            <Drop label="Language" value="(default)" className="w-[121px] border-y-0 border-r-0 bg-[#e2e2e2]" />
          </div>
        </div>

        <div className="flex min-h-0 flex-col">
          <div className="flex border-b border-[#8a9cb8]">
            <PanelTab slant className="bg-[#e1ebfd] pl-1.5 text-sm font-bold" icon={<TreeIcon className="size-[18px]" />}>Variables</PanelTab>
            <PanelTab className="bg-[#bcd3fa] pl-2" icon={<Balls />}>Breakpoints</PanelTab>
          </div>
          <div className="flex h-[27px] shrink-0 items-center overflow-hidden">
            <Tool label="Refresh">
              <Icon>
                <path d="M4 9a6 6 0 0 1 11-2M16 11a6 6 0 0 1-11 2" stroke="#b9b9b9" strokeWidth="3" />
                <path d="M17 3v6h-6zM3 17v-6h6z" fill="#b9b9b9" stroke="none" />
              </Icon>
            </Tool>
            <Tool label="Export values">
              <Icon><path d="M4 10h12v7H4zM7 3h6l-3 4z" fill="#b9b9b9" stroke="#b9b9b9" /></Icon>
            </Tool>
            <Tool label="Import values">
              <Icon><path d="M4 10h12v7H4zM7 3h6l-3 4z" fill="#b9b9b9" stroke="#b9b9b9" /></Icon>
            </Tool>
            <span className="ml-auto w-24 shrink-0 whitespace-nowrap">Time: 00 : 00 : 00</span>
          </div>
          <div className="flex-1 border border-r-0 border-[#7b8598] bg-white">
            <table className="w-full table-fixed">
              <thead>
                <tr className="h-8 text-left">
                  <th className="w-[313px] border-r border-[#e8e8e8] pl-1 font-normal">Name</th>
                  <th className="pl-1 font-normal">Value</th>
                </tr>
              </thead>
            </table>
          </div>
        </div>
      </div>
      <div className="h-[5px] shrink-0 border-t-2 border-b border-t-[#d6c78a] border-b-[#6f8198] bg-[#e5e5d8]" />
    </section>
  );
}

/* ---------- bottom bars ---------- */

function StatusBar() {
  return (
    <footer className="flex h-[25px] shrink-0 items-center bg-linear-to-b from-[#d3e3fb] via-[#bcd3f5] to-[#cbdffb]">
      <span>74, 4 )</span>
      <span className="mr-2.5 ml-auto h-5 border-l border-[#8da5c8]" />
      <Tool label="Zoom out"><Magnifier sign="-" /></Tool>
      <input
        type="range"
        aria-label="Zoom"
        defaultValue={50}
        className="mx-1 h-[23px] w-[191px] appearance-none bg-transparent [&::-webkit-slider-runnable-track]:h-[23px] [&::-webkit-slider-runnable-track]:bg-[linear-gradient(#dbe8fa,#dbe8fa)] [&::-webkit-slider-runnable-track]:bg-[length:100%_2px] [&::-webkit-slider-runnable-track]:bg-center [&::-webkit-slider-runnable-track]:bg-no-repeat [&::-webkit-slider-thumb]:h-[23px] [&::-webkit-slider-thumb]:w-[5px] [&::-webkit-slider-thumb]:appearance-none [&::-webkit-slider-thumb]:bg-[#0e6fc9]"
      />
      <Tool label="Zoom in"><Magnifier sign="+" /></Tool>
      <Drop label="Zoom level" value="100%" className="h-[22px] w-[55px] bg-white" />
      <span className="-mr-0.5"><Tool label="Fit"><Magnifier sign="fit" /></Tool></span>
    </footer>
  );
}

const Bird = () => (
  <Icon className="size-8" box="0 0 32 32">
    <path d="M4 7l8 4 4 4 6-8-1 7 6-6-5 10 4 9-7-4-7 5 0-7-7 3 6-8z" fill="#5f666b" stroke="none" />
    <path d="M8 3l8 11 4 14-7-10z" fill="#c8cdd0" stroke="none" />
    <path d="M12 24l8-10M21 10l8-7" stroke="#7d8488" strokeWidth="2" />
  </Icon>
);

const SkypeShape = ({ fill = "#0f8fe0", ink = "#fff" }: { fill?: string; ink?: string }) => (
  <>
    <path d="M9 2c3-1 5 0 6 1 9-1 15 6 13 14 3 7-3 14-10 11C9 29 3 23 4 15 1 9 4 3 9 2z" fill={fill} stroke="none" />
    <path d="M20.500 11.500C18 8.500 11.500 9 11.500 12.500c0 4.500 9.500 2.500 9.500 7 0 4-7.500 4-10 .5" stroke={ink} strokeWidth="3" />
  </>
);

const apps: { name: string; icon: ReactNode; open?: boolean; active?: boolean }[] = [
  {
    name: "Task view",
    icon: (
      <Icon className="size-6" box="0 0 24 24">
        <g stroke="#fff" strokeWidth="1.5">
          <path d="M3 2v4h13V2M3 22v-4h13v4M3.500 8.500h12v7h-12zM21 2v6M21 15v7" />
          <path d="M20 10h2v3h-2z" fill="#fff" />
        </g>
      </Icon>
    ),
  },
  {
    name: "Explorer",
    icon: (
      <Icon className="size-8" box="0 0 32 32">
        <path d="M2 5h11l3 3h14v19H2z" fill="#e9a92c" stroke="none" />
        <path d="M2 10h28v18H2z" fill="#fbd668" stroke="none" />
        <path d="M7 29V18h18v11h-5v-5h-8v5z" fill="#4f9bd6" stroke="none" />
      </Icon>
    ),
  },
  {
    name: "Edge",
    icon: (
      <Icon className="size-8" box="0 0 32 32">
        <circle cx="16" cy="16" r="15" fill="#1b82d0" stroke="none" />
        <path d="M2 11C5 4 11 0 18 1c8 1 13 7 13 13 0 5-4 8-9 7-3-.5-2-2-2-4 0-4-4-7-9-7-4 0-7 0-9 1z" fill="#3fc4a0" stroke="none" />
        <path d="M2 11C5 4 11 0 16 1c5 2 6 6 3 10-2-1-5-1-8-1-4 0-7 0-9 1z" fill="#35b5dc" stroke="none" />
        <path d="M12 14c-3 8 3 14 12 12l4-2c-4 6-11 8-17 5-6-4-6-12 1-15z" fill="#0c4f94" stroke="none" />
      </Icon>
    ),
  },
  {
    name: "Outlook",
    icon: (
      <Icon className="size-8" box="0 0 32 32">
        <path d="M3 5l15-3v28L3 27z" fill="#0a64ba" stroke="none" />
        <path d="M18 8h11v16H18z" fill="#fff" stroke="none" />
        <path d="M19 11l5 5 5-5" stroke="#0a64ba" strokeWidth="2" />
        <ellipse cx="10.5" cy="16" rx="3" ry="4.5" stroke="#fff" strokeWidth="2.5" />
      </Icon>
    ),
  },
  {
    name: "Snake",
    icon: (
      <Icon className="size-8" box="0 0 32 32">
        <path d="M2 1h28v30H2z" fill="#0f1c22" stroke="none" />
        <path d="M20 8c-3-5-10-3-9 2 1 4 9 4 9 10 0 3-3 4-5 3" stroke="#4d8050" strokeWidth="3" />
        <path d="M10 23l4 5 6-3" stroke="#fff" strokeWidth="3" />
      </Icon>
    ),
  },
  {
    name: "Firefox",
    open: true,
    icon: (
      <Icon className="size-8" box="0 0 32 32">
        <path d="M4 8l3 2 2-5 3 3c6-1 6-5 7-7 1 3 11 6 10 17-1 8-7 12-13 12C8 30 2 25 3 16z" fill="#ff5a2c" stroke="none" />
        <path d="M19 1c1 3 11 6 10 17-1 6-5 10-9 11 5-5 5-12-1-17-3-4-1-8 0-11z" fill="#ffc83a" stroke="none" />
        <circle cx="16" cy="16" r="6" fill="#3a5fc8" stroke="none" />
        <path d="M9 13c4-2 7 0 9 2-3 0-3 3-6 3z" fill="#ff9a2c" stroke="none" />
      </Icon>
    ),
  },
  {
    name: "Notepad++",
    icon: (
      <Icon className="size-8" box="0 0 32 32">
        <path d="M4 3h18l4 4v23H4z" fill="#eef3ea" stroke="none" />
        <path d="M6 16h18v12H6z" fill="#7fc24a" stroke="none" />
        <path d="M9 12c3-3 8-3 11 0M10 15h9M12 18l6 3M12 24l6-3M15 10v5" stroke="#2c4a1c" strokeWidth="1.500" />
        <path d="M30 5l-5 15" stroke="#8fc83c" strokeWidth="3" />
      </Icon>
    ),
  },
  {
    name: "Notepad",
    icon: (
      <Icon className="size-8" box="0 0 32 32">
        <path d="M12 3l14 2 3 21-4 3z" fill="#65757a" stroke="none" />
        <path d="M11 3l13 3 1 23-21-5z" fill="#b4dfe2" stroke="none" />
        <path d="M8 13l15 3 2 13-21-5z" fill="#6fb5bb" stroke="none" />
      </Icon>
    ),
  },
  { name: "Modeler", icon: <Bird /> },
  {
    name: "Green",
    icon: (
      <Icon className="size-8" box="0 0 32 32">
        <path d="M4 4h24v25H4z" fill="#5a8a1e" stroke="#e6f0d0" strokeWidth="2" />
        <path d="M11 3c2 8 7 14 16 20M6 25l21-10M19 18l6-12M20 18l6 10" stroke="#e6f0d0" strokeWidth="1.700" />
      </Icon>
    ),
  },
  { name: "Modeler 2", icon: <Bird /> },
  {
    name: "Snip",
    icon: (
      <Icon className="size-8" box="0 0 32 32">
        <ellipse cx="15" cy="11" rx="12" ry="8" fill="#f0e6ea" stroke="#c8606c" transform="rotate(-25 15 11)" />
        <path d="M7 13l15-4M15 5l1 13" stroke="#b9a0aa" />
        <circle cx="19" cy="26" r="3" stroke="#1d6fb8" strokeWidth="2" />
        <circle cx="26" cy="21" r="3" stroke="#1d6fb8" strokeWidth="2" />
        <path d="M15 19l8 1-1 5" stroke="#1d6fb8" strokeWidth="2" />
      </Icon>
    ),
  },
  { name: "Skype", icon: <Icon className="size-8" box="0 0 32 32"><SkypeShape /></Icon> },
  {
    name: "Skype for Business",
    open: true,
    icon: (
      <Icon className="size-8" box="0 0 32 32">
        <SkypeShape fill="#d8f2fc" ink="#0f9ac8" />
        <circle cx="24" cy="25" r="7" fill="#d8263a" stroke="#fff" strokeWidth="1" />
        <path d="M21 22l6 6M27 22l-6 6" stroke="#fff" strokeWidth="2" />
      </Icon>
    ),
  },
  {
    name: "Blocks",
    icon: (
      <Icon className="size-8" box="0 0 32 32">
        <path d="M6 7H2v18h4M26 7h4v18h-4" stroke="#fff" strokeWidth="2" />
        <path d="M6 2h20v11H6zM6 19h20v11H6z" fill="#0808e8" stroke="#fff" strokeWidth="2" />
      </Icon>
    ),
  },
  { name: "Modeler 3", icon: <Bird /> },
  {
    name: "Camtasia",
    open: true,
    icon: (
      <Icon className="size-8" box="0 0 32 32">
        <rect x="1" y="1" width="30" height="30" rx="3" fill="#f8683c" stroke="none" />
        <path d="M25 8H9v16h16" stroke="#fff" strokeWidth="4" />
      </Icon>
    ),
  },
  { name: "Modeler window", open: true, active: true, icon: <Bird /> },
];

const tray: { name: string; icon: ReactNode }[] = [
  { name: "Shield", icon: <Icon><path d="M2 1h12c4 2 5 8 4 17H8C3 15 1 8 2 1z" fill="#74a81c" stroke="none" /><path d="M6 10l3 3 5-6" stroke="#fff" strokeWidth="2" /></Icon> },
  { name: "Sync", icon: <Icon><path d="M13 5C9 0 4 4 8 8c5 3 6 3 5 6-2 4-6 2-7 0M7 8c-3 2-1 5 2 4" stroke="#e8e8e8" strokeWidth="2.500" /></Icon> },
  { name: "Alert", icon: <Icon><path d="M10 1l9 9-9 9-9-9z" fill="#fff" stroke="none" /><path d="M10 5v6M10 13v2" stroke="#222" strokeWidth="2.5" /></Icon> },
  { name: "Network tool", icon: <Icon><path d="M2 9c1-7 9-9 13-5l-8 8zM8 12h9" fill="#2a8fb8" stroke="#69b7d2" /><path d="M6 14h13v5H6z" fill="#fff" stroke="none" /><path d="M8 16.5h9" stroke="#c33" strokeDasharray="2 1.5" /></Icon> },
  { name: "Notes", icon: <Icon><path d="M2 2h16v11H2z" fill="#dfe7ee" stroke="#78b" /><path d="M5 6h10M5 9h8" /><path d="M3 18l7-6" stroke="#b99066" strokeWidth="3" /></Icon> },
  { name: "Skype status", icon: <Icon><circle cx="9" cy="9" r="8" fill="#8fd6f2" stroke="none" /><path d="M12 6.500C10 4 6 5 6 7s6 2 6 4-4 3-6 1" stroke="#fff" strokeWidth="2" /><circle cx="14.5" cy="15" r="4.5" fill="#d8263a" stroke="#fff" strokeWidth="1" /><path d="M12.5 13l4 4" stroke="#fff" /></Icon> },
  { name: "Defender", icon: <Icon><path d="M10 1l8 2c0 8-2 12-8 16C4 15 2 11 2 3z" fill="#fff" stroke="none" /><path d="M10 1v18M2 9h16" stroke="#222" /><rect x="10" y="10" width="9" height="9" rx="4" fill="#dc4528" stroke="none" /><path d="M12.5 12.500l4 4M16.500 12.500l-4 4" stroke="#fff" /></Icon> },
  { name: "Bluetooth", icon: <span className="rounded-full bg-[#0a6fe0] py-0.5 text-white"><Bluetooth className="size-4" /></span> },
  { name: "Audio", icon: <Icon><circle cx="10" cy="10" r="9.5" fill="#aab4bf" stroke="none" /><path d="M11 5l-6 5 6 5zM14 6v8" stroke="#e8eef2" /></Icon> },
  { name: "Microphone", icon: <Mic className="size-5 fill-white text-white" /> },
  { name: "Battery", icon: <Icon><path d="M6 6h12v8H6zM18.500 8v4M1 5v4h4V5M3 9v5h3" stroke="#fff" /><path d="M7.500 8h8v4h-8z" fill="#fff" stroke="none" /></Icon> },
  { name: "Network", icon: <Icon><circle cx="10" cy="10" r="8.5" stroke="#fff" /><ellipse cx="10" cy="10" rx="4" ry="8.5" stroke="#fff" /><path d="M2 7h16M2 13h16" stroke="#fff" /><circle cx="15" cy="15" r="4" fill="#18284a" stroke="#fff" /><path d="M12.5 12.500l5 5" stroke="#fff" /></Icon> },
  { name: "Volume", icon: <Icon><path d="M1.500 8h3l4-4v12l-4-4h-3zM11 8c1 1 1 3 0 4M13.500 6c2 2.500 2 5.500 0 8M16.500 4c3 4 3 8 0 12" stroke="#fff" /></Icon> },
];

function Taskbar() {
  return (
    <nav className="flex h-[50px] shrink-0 overflow-hidden bg-linear-to-r from-[#223642] via-[#1d3040] to-[#162549]">
      <span className="flex w-6 shrink-0 items-center">
        <Icon className="h-4 w-2" box="0 0 8 16">
          <path d="M0 2c4 1 4 11 0 12" stroke="#fff" />
        </Icon>
      </span>
      {apps.map((a) => (
        <button
          key={a.name}
          aria-label={a.name}
          className={`relative flex w-[62px] shrink-0 items-center justify-center ${a.active ? "bg-[#44566a]" : ""}`}
        >
          {a.icon}
          {a.open && <span className={`absolute bottom-0 h-[3px] bg-[#7db4ee] ${a.active ? "inset-x-0" : "inset-x-1.5"}`} />}
        </button>
      ))}
      <span className="ml-auto flex shrink-0">
        {tray.map((t) => (
          <button key={t.name} aria-label={t.name} className="flex w-[30px] items-center justify-center">
            {t.icon}
          </button>
        ))}
      </span>
      <div className="w-[54px] shrink-0 pt-1 [font-family:'Open_Sans',sans-serif] text-[13px] leading-5 whitespace-nowrap text-white">
        <p className="pl-4">7:10 PM</p>
        <p className="mt-0.5 ml-2.5 bg-[#0b0f18] pl-1.5">2023/09</p>
      </div>
    </nav>
  );
}

export default function App() {
  return (
    <div className="flex h-screen flex-col overflow-hidden bg-[#bbd8fe] [font-family:Roboto,sans-serif] text-[13px] leading-[18px] text-[#111]">
      <TopBars />
      <div className="flex min-h-0 flex-1 pb-2">
        <LeftDocks />
        <Editor />
      </div>
      <Simulation />
      <StatusBar />
      <Taskbar />
    </div>
  );
}
